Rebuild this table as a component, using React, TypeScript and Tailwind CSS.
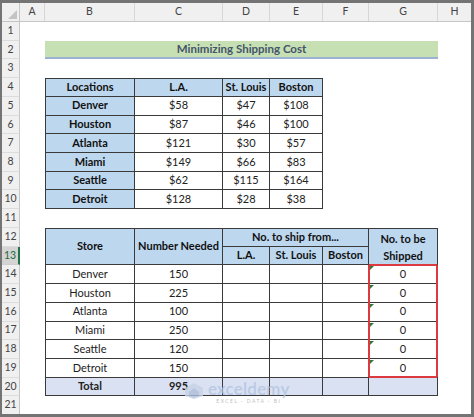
import React from "react";

// column widths (px) taken from the sheet: row header, A..H
const cA = "w-[25px] shrink-0";
const cB = "w-[90px] shrink-0";
const cC = "w-[88px] shrink-0";
const cD = "w-[47px] shrink-0";
const cE = "w-[53px] shrink-0";
const cF = "w-[46px] shrink-0";
const cG = "w-[69px] shrink-0";

const line = "border-[#3a3a3a]";
const center = "flex items-center justify-center";
const blue = "bg-[#bdd7ee] font-bold text-[#111]";

const prices = [
  ["Denver", "$58", "$47", "$108"],
  ["Houston", "$87", "$46", "$100"],
  ["Atlanta", "$121", "$30", "$57"],
  ["Miami", "$149", "$66", "$83"],
  ["Seattle", "$62", "$115", "$164"],
  ["Detroit", "$128", "$28", "$38"],
];

const stores = [
  ["Denver", "150"],
  ["Houston", "225"],
  ["Atlanta", "100"],
  ["Miami", "250"],
  ["Seattle", "120"],
  ["Detroit", "150"],
];

const RowHead = ({ n, active }: { n: number; active?: boolean }) => (
  <div
    className={
      active
        ? "w-[18px] h-[18.72px] shrink-0 flex items-center justify-center bg-[#d4d4d4] text-[#1f6b3b] border-b border-b-[#cfcfcf] border-r-2 border-r-[#217346] text-[10.5px]"
        : "w-[18px] h-[18.72px] shrink-0 flex items-center justify-center bg-[#f0f0f0] text-[#444] border-b border-b-[#dcdcdc] border-r border-r-[#c6c6c6] text-[10.5px]"
    }
  >
    {n}
  </div>
);

const Row = ({ n, children }: { n: number; children?: React.ReactNode }) => (
  <div className="flex h-[18.72px]">
    <RowHead n={n} />
    <div className={cA} />
    {children}
  </div>
);

export default function App() {
  return (
    <div className="w-[474px] h-[417px] bg-[#747474] pt-[3px] pl-[2px] font-[Lato,sans-serif]">
      <div className="relative w-[469px] h-[411px] bg-white overflow-hidden text-[11px] text-[#222]">
        {/* column letters */}
        <div className="flex h-[19px] bg-[#f0f0f0] border-b border-[#c6c6c6] text-[10.5px] text-[#444]">
          <div className="w-[18px] shrink-0 flex items-end justify-end p-[2px] border-r border-[#c6c6c6]">
            <div className="w-0 h-0 border-l-[9px] border-l-transparent border-b-[9px] border-b-[#c4c4c4]" />
          </div>
          <div className={`${cA} ${center} border-r border-[#d6d6d6]`}>A</div>
          <div className={`${cB} ${center} border-r border-[#d6d6d6]`}>B</div>
          <div className={`${cC} ${center} border-r border-[#d6d6d6]`}>C</div>
          <div className={`${cD} ${center} border-r border-[#d6d6d6]`}>D</div>
          <div className={`${cE} ${center} border-r border-[#d6d6d6]`}>E</div>
          <div className={`${cF} ${center} border-r border-[#d6d6d6]`}>F</div>
          <div className={`${cG} ${center} border-r border-[#d6d6d6]`}>G</div>
          <div className={`w-[33px] ${center}`}>H</div>
        </div>

        <Row n={1} />
        <Row n={2}>
          <div className={`w-[393px] shrink-0 ${center} bg-[#c6e0b4] border-b-2 border-[#9db2d3] font-bold text-[11.5px] text-[#44546a]`}>
            Minimizing Shipping Cost
          </div>
        </Row>
        <Row n={3} />

        {/* first table */}
        <Row n={4}>
          <div className={`${cB} ${center} ${blue} border ${line}`}>Locations</div>
          <div className={`${cC} ${center} ${blue} border-t border-r border-b ${line}`}>L.A.</div>
          <div className={`${cD} ${center} ${blue} border-t border-r border-b ${line}`}>St. Louis</div>
          <div className={`${cE} ${center} ${blue} border-t border-r border-b ${line}`}>Boston</div>
        </Row>
        {prices.map((p, i) => (
          <Row n={5 + i} key={p[0]}>
            <div className={`${cB} ${center} ${blue} border-l border-r border-b ${line}`}>{p[0]}</div>
            <div className={`${cC} ${center} border-r border-b ${line}`}>{p[1]}</div>
            <div className={`${cD} ${center} border-r border-b ${line}`}>{p[2]}</div>
            <div className={`${cE} ${center} border-r border-b ${line}`}>{p[3]}</div>
          </Row>
        ))}
        <Row n={11} />

        {/* second table, header spans rows 12-13 */}
        <div className="flex h-[37.44px]">
          <div className="flex flex-col">
            <RowHead n={12} />
            <RowHead n={13} active />
          </div>
          <div className={cA} />
          <div className={`${cB} ${center} ${blue} border ${line}`}>Store</div>
          <div className={`${cC} ${center} ${blue} border-t border-r border-b ${line}`}>Number Needed</div>
          <div className="w-[146px] shrink-0 flex flex-col">
            <div className={`h-[18.72px] ${center} ${blue} border-t border-r border-b ${line}`}>No. to ship from...</div>
            <div className="flex h-[18.72px]">
              <div className={`${cD} ${center} ${blue} border-r border-b ${line}`}>L.A.</div>
              <div className={`${cE} ${center} ${blue} border-r border-b ${line}`}>St. Louis</div>
              <div className={`${cF} ${center} ${blue} border-r border-b ${line}`}>Boston</div>
            </div>
          </div>
          <div className={`${cG} ${center} ${blue} border-t border-r border-b ${line} text-center leading-[17px]`}>
            No. to be
            <br />
            Shipped
          </div>
        </div>

        {stores.map((s, i) => (
          <Row n={14 + i} key={s[0]}>
            <div className={`${cB} ${center} border-l border-r border-b ${line}`}>{s[0]}</div>
            <div className={`${cC} ${center} border-r border-b ${line}`}>{s[1]}</div>
            <div className={`${cD} border-r border-b ${line}`} />
            <div className={`${cE} border-r border-b ${line}`} />
            <div className={`${cF} border-r border-b ${line}`} />
            <div className={`${cG} relative ${center} border-r border-b ${line}`}>
              <div className="absolute left-[1px] top-[1px] w-0 h-0 border-t-[4px] border-t-[#2d7a3a] border-r-[4px] border-r-transparent" />
              0
              {i === 0 && (
                <div className="absolute left-[-1px] top-[-1px] w-[70px] h-[113.3px] border-2 border-[#dc3a40] rounded-[2px] z-10" />
              )}
            </div>
          </Row>
        ))}

        <Row n={20}>
          <div className={`${cB} ${center} bg-[#d9e1f2] font-bold border-l border-r border-b ${line}`}>Total</div>
          <div className={`${cC} ${center} bg-[#d9e1f2] font-bold border-r border-b ${line}`}>995</div>
          <div className={`${cD} bg-[#d9e1f2] border-r border-b ${line}`} />
          <div className={`${cE} bg-[#d9e1f2] border-r border-b ${line}`} />
          <div className={`${cF} bg-[#d9e1f2] border-r border-b ${line}`} />
          <div className={`${cG} bg-[#d9e1f2] border-r border-b ${line}`} />
        </Row>
        <Row n={21} />

        {/* exceldemy watermark */}
        <div className="absolute left-[181px] top-[377px] flex items-start gap-[3px] opacity-80 pointer-events-none">
          <svg width="22" height="18" viewBox="0 0 22 18" className="mt-[2px]">
            <path d="M11 1 L20 6 L20 14 L11 17 L2 14 L2 6 Z" fill="#c7d3e6" />
            <path d="M6 10 L11 6 L16 10 L16 14 L11 16 L6 14 Z" fill="#aebfd9" />
          </svg>
          <div className="flex flex-col items-center">
            <div className="text-[17px] font-semibold leading-[18px] text-[#b3c5e3] tracking-[0.2px]">exceldemy</div>
            <div className="text-[5px] leading-[6px] tracking-[1.5px] text-[#b0b0b0]">EXCEL · DATA · BI</div>
          </div>
        </div>
      </div>
    </div>
  );
}
